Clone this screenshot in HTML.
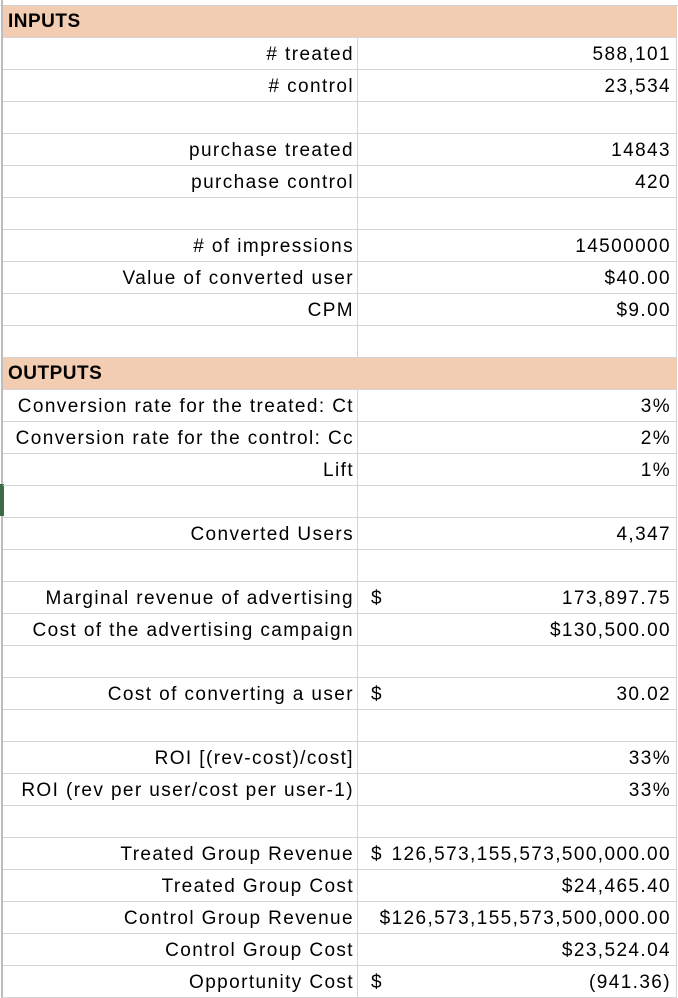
<!DOCTYPE html>
<html><head><meta charset="utf-8"><style>
body{margin:0;width:678px;height:998px;background:#fff;position:relative;overflow:hidden;font-family:"Liberation Sans",sans-serif;font-size:19px;letter-spacing:1.4px;color:#000}
.r{position:absolute;left:3px;width:674px;height:32px;border-bottom:1px solid #d4d4d4;box-sizing:border-box}
.h{background:#f3cdb1}
.a{position:absolute;left:0;width:351px;top:1px;height:31px;line-height:31px;text-align:right;white-space:nowrap}
.sep{position:absolute;left:354px;top:0;width:1px;height:31px;background:#d4d4d4}
.b{position:absolute;left:355px;width:313px;top:1px;height:31px;line-height:31px;text-align:right;white-space:nowrap}
.d{position:absolute;left:368px;top:1px;line-height:31px}
.t{position:absolute;left:5px;top:0;line-height:31px;font-weight:bold;letter-spacing:0.5px}
.rb{position:absolute;right:0;top:0;width:1px;height:31px;background:#d4d4d4}
</style></head><body>
<div style="position:absolute;left:0;top:0;width:678px;height:5px;border-bottom:1px solid #d4d4d4"></div>
<div style="position:absolute;left:1px;top:0;width:2px;height:998px;background:#bdbdbd"></div>
<div style="position:absolute;left:0;top:484px;width:4px;height:32px;background:#3d6b47"></div>
<div id="g"></div>
<script>
var rows=[
["H","INPUTS"],["# treated","588,101"],["# control","23,534"],["",""],
["purchase treated","14843"],["purchase control","420"],["",""],
["# of impressions","14500000"],["Value of converted user","$40.00"],["CPM","$9.00"],["",""],
["H","OUTPUTS"],["Conversion rate for the treated: Ct","3%"],["Conversion rate for the control: Cc","2%"],["Lift","1%"],["",""],
["Converted Users","4,347"],["",""],
["Marginal revenue of advertising","173,897.75","$"],["Cost of the advertising campaign","$130,500.00"],["",""],
["Cost of converting a user","30.02","$"],["",""],
["ROI [(rev-cost)/cost]","33%"],["ROI (rev per user/cost per user-1)","33%"],["",""],
["Treated Group Revenue","126,573,155,573,500,000.00","$"],["Treated Group Cost","$24,465.40"],["Control Group Revenue","$126,573,155,573,500,000.00"],["Control Group Cost","$23,524.04"],["Opportunity Cost","(941.36)","$"]];
var h="";rows.forEach(function(r,i){var top=6+32*i;
if(r[0]=="H"){h+='<div class="r h" style="top:'+top+'px"><span class="t">'+r[1]+'</span></div>';}
else{h+='<div class="r" style="top:'+top+'px"><div class="sep"></div><div class="a">'+r[0]+'</div><div class="b">'+r[1]+'</div>'+(r[2]?'<span class="d">$</span>':'')+'<div class="rb"></div></div>';}});
document.getElementById("g").innerHTML=h;
</script>
</body></html>
